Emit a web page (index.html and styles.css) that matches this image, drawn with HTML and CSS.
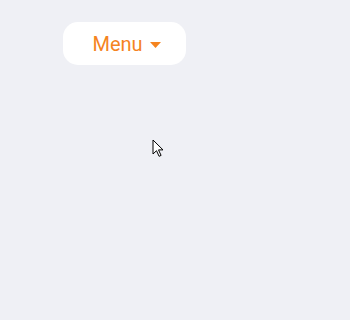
FILE: index.html
```html
<!DOCTYPE html>
<html>
<head>
  <title>Menu</title>
  <link rel="stylesheet" href="styles.css">
</head>
<body>
  <div class="page">
    <button class="menu-button" id="menuButton">
      <span class="menu-label">Menu</span>
      <svg class="caret" xmlns="http://www.w3.org/2000/svg" width="11" height="6" viewBox="0 0 11 6">
        <path d="M0 0h11L5.5 6z" fill="#f5841f"/>
      </svg>
    </button>
  </div>
  <svg class="cursor" xmlns="http://www.w3.org/2000/svg" width="13" height="19" viewBox="0 0 13 19">
    <path d="M1 1v14l3.5-3.3 2.6 5.6 2-.9-2.6-5.5H11z" fill="#ffffff" stroke="#000000" stroke-width="1" stroke-linejoin="miter"/>
  </svg>
</body>
</html>
```

FILE: styles.css
```css
body {
  font-family: Roboto, 'Noto Sans', sans-serif;
  margin: 0;
  padding: 0;
  background-color: #eff0f5;
  width: 350px;
  height: 320px;
  overflow: hidden;
}
.page {
  padding: 22px 0 0 63px;
}
.menu-button {
  display: flex;
  align-items: center;
  justify-content: center;
  gap: 7px;
  width: 123px;
  height: 43px;
  padding: 0 0 0 4px;
  background-color: #ffffff;
  border: none;
  border-radius: 15px;
  cursor: pointer;
  font-family: inherit;
}
.menu-label {
  font-size: 20px;
  color: #f5841f;
  line-height: 1;
}
.caret {
  display: block;
  margin-top: 2px;
}
.cursor {
  position: absolute;
  left: 152px;
  top: 139px;
}
```
